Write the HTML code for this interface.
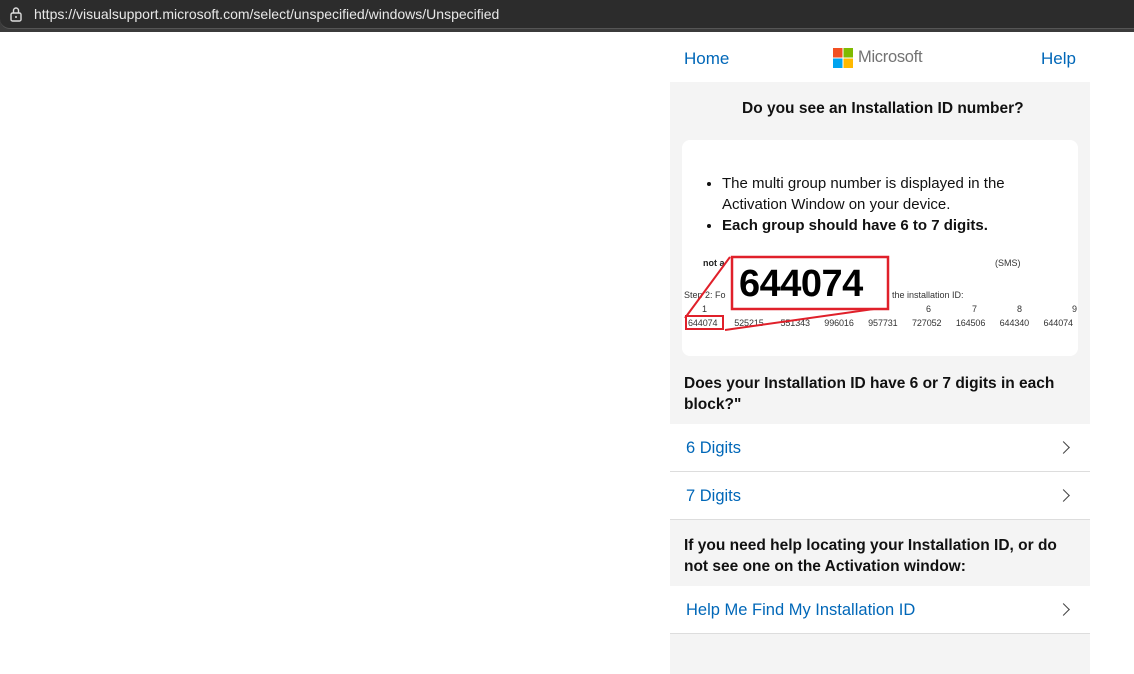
<!DOCTYPE html>
<html><head><meta charset="utf-8"><style>
body{margin:0;width:1134px;height:667px;overflow:hidden;background:#fff;font-family:"Liberation Sans",sans-serif;position:relative}
.bar{position:absolute;left:0;top:0;width:1134px;height:32px;background:#3b3b3b}
.field{position:absolute;left:0;top:0;width:1134px;height:28px;background:#2c2c2c;border-bottom:1px solid #555;border-radius:0 0 0 10px}
.url{position:absolute;left:34px;top:6px;font-size:14px;color:#e8e8e8}
.p{position:absolute;left:670px;width:420px}
.a{position:absolute;font-size:17px;color:#0067b8}
.row{position:absolute;left:670px;width:420px;height:47px;background:#fff;border-bottom:1px solid #ddd}
.row span{position:absolute;left:16px;top:15px;font-size:16.5px;color:#0067b8}
.chev{position:absolute;right:22px;top:19px;width:8px;height:8px;border-right:1.5px solid #444;border-top:1.5px solid #444;transform:rotate(45deg)}
.b{font-weight:bold;font-size:15.5px;color:#111}
</style></head><body>
<div class="bar"><div class="field"></div>
<svg style="position:absolute;left:9px;top:6px" width="14" height="16" viewBox="0 0 14 16"><rect x="2" y="7" width="10" height="8" rx="1.5" fill="none" stroke="#ddd" stroke-width="1.4"/><path d="M4.5 7V4.5a2.5 2.5 0 0 1 5 0V7" fill="none" stroke="#ddd" stroke-width="1.4"/><circle cx="7" cy="11" r="1" fill="#ddd"/></svg>
<div class="url">https://visualsupport.microsoft.com/select/unspecified/windows/Unspecified</div></div>
<div class="a" style="left:684px;top:49px">Home</div>
<div class="a" style="left:1041px;top:49px">Help</div>
<svg style="position:absolute;left:833px;top:48px" width="20" height="20"><rect width="9.5" height="9.5" fill="#f25022"/><rect x="10.5" width="9.5" height="9.5" fill="#7fba00"/><rect y="10.5" width="9.5" height="9.5" fill="#00a4ef"/><rect x="10.5" y="10.5" width="9.5" height="9.5" fill="#ffb900"/></svg>
<div style="position:absolute;left:858px;top:48px;font-size:16.5px;color:#737373;letter-spacing:-0.3px">Microsoft</div>
<div class="p" style="top:82px;height:342px;background:#f4f4f4"></div>
<div class="b" style="position:absolute;left:742px;top:100px">Do you see an Installation ID number?</div>
<div style="position:absolute;left:682px;top:140px;width:396px;height:216px;background:#fff;border-radius:8px"></div>
<ul style="position:absolute;left:682px;top:173px;margin:0;padding-left:40px;width:330px;font-size:15px;line-height:21px;color:#111">
<li>The multi group number is displayed in the Activation Window on your device.</li>
<li style="font-weight:bold">Each group should have 6 to 7 digits.</li></ul>
<div style="position:absolute;left:703px;top:258px;font-size:9px;font-weight:bold;color:#222">not a</div>
<div style="position:absolute;left:995px;top:258px;font-size:9px;color:#333">(SMS)</div>
<div style="position:absolute;left:684px;top:290px;font-size:9px;color:#333">Step 2: Fo</div>
<div style="position:absolute;left:892px;top:290px;font-size:9px;color:#333">the installation ID:</div>
<div style="position:absolute;left:684px;top:304px;width:394px;font-size:9px;color:#333">
<span style="position:absolute;left:18px">1</span><span style="position:absolute;left:242px">6</span><span style="position:absolute;left:288px">7</span><span style="position:absolute;left:333px">8</span><span style="position:absolute;left:388px">9</span></div>
<div style="position:absolute;left:688px;top:318px;font-size:9px;color:#333;white-space:pre;letter-spacing:-0.1px">644074       525215       551343      996016      957731      727052      164506      644340      644074</div>
<svg style="position:absolute;left:682px;top:250px" width="220" height="85"><path d="M3 68 L48 7 M43 80 L206 57" stroke="#e0202a" stroke-width="2"/><rect x="4" y="66" width="37" height="13" fill="none" stroke="#e0202a" stroke-width="2"/><rect x="50" y="7" width="156" height="52" fill="#fff" stroke="#e0202a" stroke-width="2.5"/></svg>
<div style="position:absolute;left:739px;top:263px;font-size:38px;font-weight:bold;color:#000;letter-spacing:-0.5px">644074</div>
<div class="b" style="position:absolute;left:684px;top:373px;width:390px;line-height:21px">Does your Installation ID have 6 or 7 digits in each block?"</div>
<div class="row" style="top:424px"><span>6 Digits</span><div class="chev"></div></div>
<div class="row" style="top:472px"><span>7 Digits</span><div class="chev"></div></div>
<div class="p" style="top:520px;height:66px;background:#f4f4f4"></div>
<div class="b" style="position:absolute;left:684px;top:535px;width:390px;line-height:21px">If you need help locating your Installation ID, or do not see one on the Activation window:</div>
<div class="row" style="top:586px"><span>Help Me Find My Installation ID</span><div class="chev"></div></div>
<div class="p" style="top:634px;height:40px;background:#f4f4f4"></div>
</body></html>
